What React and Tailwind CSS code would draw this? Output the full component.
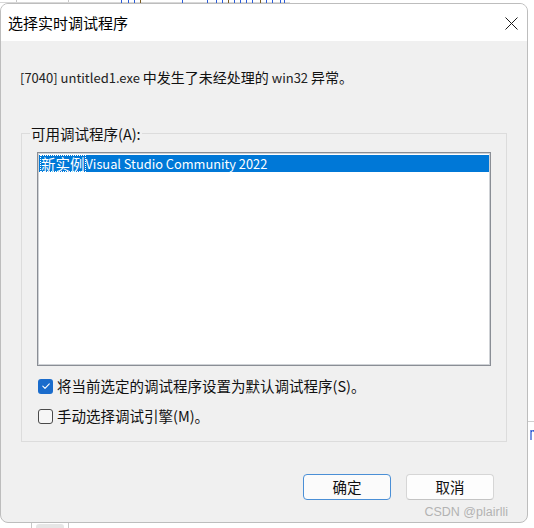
import React from "react";

const FONT = { fontFamily: '"Noto Sans CJK SC", "Noto Sans", sans-serif' };

function Backdrop() {
  const ticks = [121, 128, 134, 140, 182, 207, 216, 222, 228, 234, 240, 246, 252, 260, 266, 272, 280, 284];
  return (
    <svg className="absolute left-0 top-0" width="534" height="528" viewBox="0 0 534 528">
      <line x1="16.5" y1="0" x2="16.5" y2="3" stroke="#c8c8c8" />
      <line x1="68.5" y1="0" x2="68.5" y2="3" stroke="#c8c8c8" />
      <line x1="0" y1="2.5" x2="290" y2="2.5" stroke="#d8d8d8" />
      {ticks.map((x, i) => (
        <line key={i} x1={x + 0.5} y1="0" x2={x + 0.5} y2="3" stroke={i % 5 === 3 ? "#7a5a20" : "#2a5bd8"} />
      ))}
      <line x1="31.5" y1="522" x2="31.5" y2="528" stroke="#c8c8c8" />
      <line x1="68.5" y1="522" x2="68.5" y2="528" stroke="#c8c8c8" />
      <rect x="36" y="524" width="28" height="8" rx="3" fill="#e6e6e6" />
      <line x1="528" y1="421.5" x2="534" y2="421.5" stroke="#cfcfcf" />
      <path d="M531 430 V440 M531 432 Q534 429 534 432" stroke="#1f4fd0" strokeWidth="1.2" fill="none" />
    </svg>
  );
}

function CheckBox({ checked }) {
  return checked ? (
    <div className="w-[15px] h-[15px] rounded-[3px] bg-[#1a6ccc] flex items-center justify-center shrink-0">
      <svg width="10" height="10" viewBox="0 0 10 10">
        <path d="M1.8 5.2 L4 7.3 L8.3 2.8" stroke="#fff" strokeWidth="1.1" fill="none" strokeLinecap="round" strokeLinejoin="round" />
      </svg>
    </div>
  ) : (
    <div className="w-[15px] h-[15px] rounded-[3px] border border-[#4a4a4a] bg-[#f6f6f6] shrink-0" />
  );
}

export default function App() {
  return (
    <div className="relative w-[534px] h-[528px] bg-white overflow-hidden" style={FONT}>
      <Backdrop />
      <div className="absolute left-0 top-[3px] w-[528px] h-[520px] border border-[#bdbdbd] rounded-[8px] bg-[#f0f0f0] overflow-hidden flex flex-col">
        <div className="h-[37px] bg-white flex items-center justify-between pl-[7px] pr-[9px] shrink-0">
          <span className="text-[15px] text-black leading-none">选择实时调试程序</span>
          <svg width="13" height="13" viewBox="0 0 13 13" className="mt-[1px]">
            <path d="M0.5 0.5 L12.5 12.5 M12.5 0.5 L0.5 12.5" stroke="#1a1a1a" strokeWidth="1" />
          </svg>
        </div>
        <div className="flex-1 flex flex-col">
          <div className="pl-[19px] pt-[26px] text-[14px] leading-[20px] text-[#111]">
            <span className="text-[13px] text-[#222]">[7040] untitled1.exe </span>
            中发生了未经处理的
            <span className="text-[13px] text-[#222]"> win32 </span>
            异常。
          </div>
          <div className="relative ml-[20px] mt-[45px] w-[486px] h-[309px] border border-[#dcdcdc]">
            <span className="absolute left-[8px] top-[-9px] bg-[#f0f0f0] px-[1px] text-[14.5px] leading-[18px] text-[#111]">
              可用调试程序(A):
            </span>
            <div className="ml-[15px] mt-[18px] w-[454px] h-[214px] border border-[#8a8e95] bg-white">
              <div className="h-full border border-[#cfd2d6] pt-px">
                <div className="h-[17px] bg-[#0078d7] flex items-center text-white">
                  <span className="ml-px border border-dotted border-white text-[14.5px] leading-[15px]">新实例</span>
                  <span className="text-[12.8px] leading-[15px]">Visual Studio Community 2022</span>
                </div>
              </div>
            </div>
            <div className="ml-[16px] mt-[12px] flex items-center gap-[4px] h-[16px]">
              <CheckBox checked />
              <span className="text-[14.5px] leading-[20px] text-[#111]">将当前选定的调试程序设置为默认调试程序(S)。</span>
            </div>
            <div className="ml-[16px] mt-[14px] flex items-center gap-[4px] h-[16px]">
              <CheckBox />
              <span className="text-[14.5px] leading-[20px] text-[#111]">手动选择调试引擎(M)。</span>
            </div>
          </div>
          <div className="flex justify-end gap-[15px] pr-[33px] mt-[32px]">
            <button className="w-[88px] h-[26px] rounded-[4px] border border-[#4a8fd6] bg-[#fbfbfb] text-[14.5px] text-[#111] leading-none">
              确定
            </button>
            <button className="w-[88px] h-[26px] rounded-[4px] border border-[#d6d6d6] border-b-[#c4c4c4] bg-[#fdfdfd] text-[14.5px] text-[#111] leading-none">
              取消
            </button>
          </div>
          <div className="flex justify-end pr-[19px] mt-[5px]">
            <span className="text-[12.5px] leading-[14px] text-[#b3b3b3]" style={{ fontFamily: '"Liberation Sans", Arial, sans-serif' }}>
              CSDN @plairlli
            </span>
          </div>
        </div>
      </div>
    </div>
  );
}
